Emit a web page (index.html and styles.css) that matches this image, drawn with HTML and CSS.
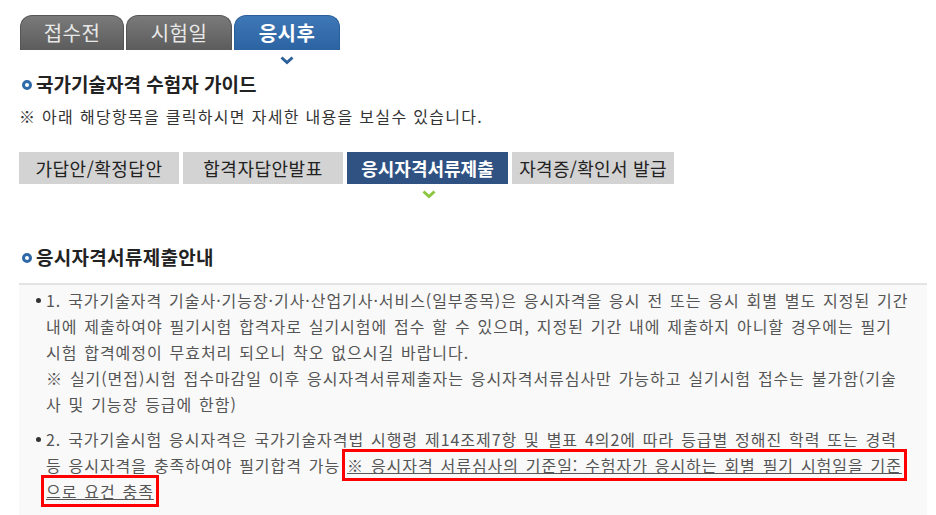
FILE: index.html
```html
<!DOCTYPE html>
<html lang="ko">
<head>
<meta charset="utf-8">
<link rel="stylesheet" href="styles.css">
</head>
<body>
<div class="page">
  <ul class="stage-tabs">
    <li class="stage-tab">접수전</li>
    <li class="stage-tab">시험일</li>
    <li class="stage-tab active">응시후</li>
  </ul>
  <div class="stage-arrow">
    <svg width="14" height="9" viewBox="0 0 14 9"><polyline points="1.5,1.5 7,6.5 12.5,1.5" fill="none" stroke="#2d5f9a" stroke-width="3"/></svg>
  </div>

  <h2 class="title title-guide"><span class="ring"></span>국가기술자격 수험자 가이드</h2>
  <p class="notice">※ 아래 해당항목을 클릭하시면 자세한 내용을 보실수 있습니다.</p>

  <ul class="sub-tabs">
    <li class="sub-tab">가답안/확정답안</li>
    <li class="sub-tab">합격자답안발표</li>
    <li class="sub-tab active">응시자격서류제출</li>
    <li class="sub-tab">자격증/확인서 발급</li>
  </ul>
  <div class="sub-arrow">
    <svg width="14" height="9" viewBox="0 0 14 9"><polyline points="1.5,1.5 7,6.5 12.5,1.5" fill="none" stroke="#8cc63f" stroke-width="3"/></svg>
  </div>

  <h2 class="title title-section"><span class="ring"></span>응시자격서류제출안내</h2>

  <div class="info-box">
    <ul class="info-list">
      <li>1. 국가기술자격 기술사·기능장·기사·산업기사·서비스(일부종목)은 응시자격을 응시 전 또는 응시 회별 별도 지정된 기간 내에 제출하여야 필기시험 합격자로 실기시험에 접수 할 수 있으며, 지정된 기간 내에 제출하지 아니할 경우에는 필기 시험 합격예정이 무효처리 되오니 착오 없으시길 바랍니다.<br>※ 실기(면접)시험 접수마감일 이후 응시자격서류제출자는 응시자격서류심사만 가능하고 실기시험 접수는 불가함(기술사 및 기능장 등급에 한함)</li>
      <li>2. 국가기술시험 응시자격은 국가기술자격법 시행령 제14조제7항 및 별표 4의2에 따라 등급별 정해진 학력 또는 경력 등 응시자격을 충족하여야 필기합격 가능 <span class="mark">※ 응시자격 서류심사의 기준일: 수험자가 응시하는 회별 필기 시험일을 기준으로 요건 충족</span></li>
    </ul>
  </div>
</div>
</body>
</html>
```

FILE: styles.css
```css
* { box-sizing: border-box; }
html, body { margin: 0; padding: 0; background: #fff; }
body {
  font-family: "Noto Sans CJK KR", "Noto Sans", sans-serif;
  color: #333;
  width: 936px;
  height: 515px;
  overflow: hidden;
}
ul { list-style: none; margin: 0; padding: 0; }
p, h2 { margin: 0; }

.page {
  padding: 15px 0 0 19px;
  display: flex;
  flex-direction: column;
  align-items: flex-start;
}

/* stage tabs */
.stage-tabs {
  display: flex;
  gap: 2px;
  margin-left: 1px;
}
.stage-tab {
  width: 106px;
  height: 35px;
  border-radius: 12px 12px 0 0;
  background: linear-gradient(#7a7a7a, #5c5c5c);
  border: 1px solid #555;
  border-bottom: none;
  color: #e8e8e8;
  font-size: 20px;
  line-height: 33px;
  text-align: center;
  letter-spacing: 0.5px;
}
.stage-tab:first-child { width: 104px; }
.stage-tab.active {
  background: linear-gradient(#3f78b6, #2c63a2);
  border-color: #2a5f9c;
  color: #fff;
  font-weight: bold;
}
.stage-arrow {
  margin: 6px 0 0 261px;
  height: 9px;
  line-height: 0;
}

/* titles */
.title {
  display: flex;
  align-items: center;
  font-size: 19px;
  font-weight: bold;
  color: #222;
  letter-spacing: 0;
  line-height: 24px;
}
.ring {
  width: 10px;
  height: 10px;
  border-radius: 50%;
  border: 3px solid #2f6aa8;
  margin: 1px 4px 0 3px;
}
.title-guide { margin-top: 7px; }
.title-section { margin-top: 46px; letter-spacing: 0.3px; }

.notice {
  margin-top: 10px;
  font-size: 16px;
  letter-spacing: 1.3px;
  color: #333;
  line-height: 20px;
}

/* sub tabs */
.sub-tabs {
  display: flex;
  gap: 4px;
  margin-top: 26px;
}
.sub-tab {
  width: 160px;
  height: 32px;
  background: #d3d3d3;
  color: #222;
  font-size: 18px;
  line-height: 32px;
  text-align: center;
  letter-spacing: 0.5px;
}
.sub-tab:nth-child(3) { width: 161px; }
.sub-tab:nth-child(4) { width: 162px; letter-spacing: 0.3px; }
.sub-tab.active {
  background: #2f5283;
  color: #fff;
  font-weight: bold;
  letter-spacing: 0;
}
.sub-arrow {
  margin: 6px 0 0 403px;
  height: 9px;
  line-height: 0;
}

/* info box */
.info-box {
  margin-top: 14px;
  width: 908px;
  background: #f9f9f9;
  border-top: 2px solid #e4e4e4;
  padding: 2px 17px 20px 17px;
  align-self: flex-start;
}
.info-list li {
  position: relative;
  padding-left: 10px;
  font-size: 16px;
  line-height: 26px;
  letter-spacing: 0.95px;
  word-spacing: 1.5px;
  color: #555;
  margin-bottom: 9px;
}
.info-list li::before {
  content: "";
  position: absolute;
  left: 0;
  top: 11px;
  width: 5px;
  height: 5px;
  border-radius: 50%;
  background: #333;
}
.mark {
  border: 3px solid #f00;
  padding: 1px 2px;
  margin: 0 -5px;
  text-decoration: underline;
  -webkit-box-decoration-break: clone;
  box-decoration-break: clone;
}
```
